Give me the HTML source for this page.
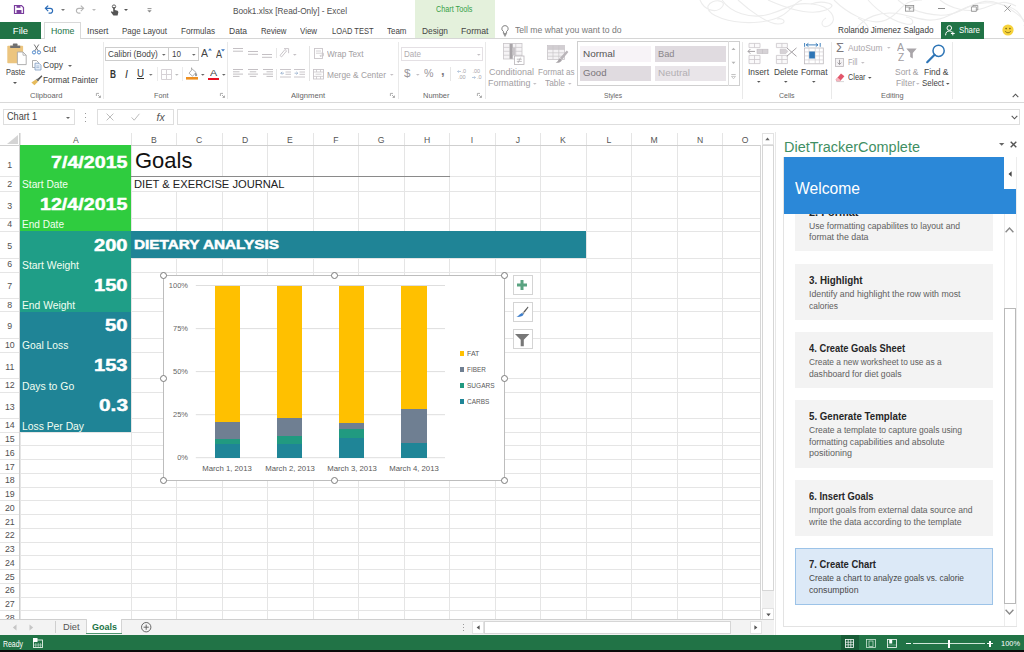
<!DOCTYPE html>
<html><head><meta charset="utf-8"><title>Excel</title>
<style>
html,body{margin:0;padding:0;background:#fff;}
body{width:1024px;height:652px;overflow:hidden;font-family:"Liberation Sans",sans-serif;}
#r{position:relative;width:1024px;height:652px;overflow:hidden;background:#fff;}
.a{position:absolute;}
.t{white-space:nowrap;}
svg{overflow:visible;}
</style></head><body><div id="r">
<svg class="a" style="left:0px;top:0px" width="1024" height="40" viewBox="0 0 1024 40"><g fill="none" stroke="#ececec" stroke-width="1.1">
<path d="M700 0C704 10 716 14 722 7S712-2 708 6C706 15 730 25 760 22S790 4 802 0"/>
<path d="M722 0C730 12 750 20 770 14S792 2 812 4S838 20 830 25S819 22 826 18"/>
<path d="M738 0C750 11 768 24 778 24S784 17 777 19"/>
<path d="M768 0C788 9 810 16 826 10S822 0 811 4"/>
<path d="M834 0C846 12 870 27 886 20S900 0 922 0"/>
<path d="M856 29C864 18 880 10 900 14S930 25 950 15S980 0 1000 4S1022 18 1024 22"/>
<path d="M898 0C910 11 940 21 960 11S990-4 1010 9S1024 24 1024 26"/>
<path d="M868 0C880 14 896 22 906 24S914 18 906 17"/>
<path d="M940 0C950 8 968 14 984 8S1004 0 1016 6"/>
<path d="M858 18C866 22 872 30 866 33S858 28 864 26"/>
</g></svg>
<div class="a" style="left:415px;top:0px;width:80px;height:38px;background:#e4f1dc;"></div>
<svg class="a" style="left:13.7px;top:5px" width="10" height="9" viewBox="0 0 10 9"><path d="M0.5 0.5h7l2 2v6h-9z" fill="none" stroke="#7b3f9e" stroke-width="1.2"/><rect x="2.5" y="5" width="5" height="3.5" fill="#7b3f9e"/><rect x="2.5" y="0.5" width="4" height="2.3" fill="#7b3f9e"/></svg>
<svg class="a" style="left:44px;top:5px" width="10" height="8.8" viewBox="0 0 11 11"><path d="M1.5 4.2H7a3 3 0 0 1 0 6H5" fill="none" stroke="#2b6cb8" stroke-width="1.5"/><path d="M4.5 0.8L1 4.2l3.5 3.4" fill="none" stroke="#2b6cb8" stroke-width="1.5"/></svg>
<svg class="a" style="left:60.5px;top:8.5px" width="4" height="2.5" viewBox="0 0 4 2.5"><path d="M0 0H4L2 2Z" fill="#777"/></svg>
<svg class="a" style="left:75px;top:5px" width="10" height="8.8" viewBox="0 0 11 11"><path d="M9.5 4.2H4a3 3 0 0 0 0 6h2" fill="none" stroke="#b5b5b5" stroke-width="1.4"/><path d="M6.5 0.8L10 4.2 6.5 7.6" fill="none" stroke="#b5b5b5" stroke-width="1.4"/></svg>
<svg class="a" style="left:91.5px;top:8.5px" width="4" height="2.5" viewBox="0 0 4 2.5"><path d="M0 0H4L2 2Z" fill="#bbb"/></svg>
<svg class="a" style="left:109.5px;top:4px" width="9" height="12" viewBox="0 0 9 12"><circle cx="4" cy="2.6" r="1.7" fill="none" stroke="#555" stroke-width="0.9"/><path d="M3.2 3v5L1.5 7.2 0.8 8l2.6 3.5h4.2L8.4 8 7.6 6.8 4.8 6V3z" fill="#555"/></svg>
<svg class="a" style="left:124px;top:8.5px" width="4" height="2.5" viewBox="0 0 4 2.5"><path d="M0 0H4L2 2Z" fill="#555"/></svg>
<svg class="a" style="left:146.5px;top:8px" width="5" height="5" viewBox="0 0 5 5"><path d="M0.5 0.6h4" stroke="#888" stroke-width="0.9"/><path d="M0.3 2.2h4.4L2.5 4.6z" fill="#888"/></svg>
<svg class="a" style="left:904.6px;top:4.9px" width="9.2" height="6.6" viewBox="0 0 9.2 6.6"><rect x="0.45" y="0.45" width="8.3" height="5.7" fill="none" stroke="#8c8c8c" stroke-width="0.8"/><path d="M0.5 2.1h8.2M4.6 2.8v2.7M3.4 4l1.2-1.2L5.8 4" fill="none" stroke="#8c8c8c" stroke-width="0.7"/></svg>
<div class="a" style="left:938.4px;top:8px;width:7px;height:1px;background:#8c8c8c;"></div>
<svg class="a" style="left:970.7px;top:4.8px" width="7.2" height="6.8" viewBox="0 0 7.2 6.8"><path d="M0.45 1.9h4.9v4.5H0.45zM1.9 1.9V0.45h4.9v4.5H5.35" fill="none" stroke="#8c8c8c" stroke-width="0.8"/></svg>
<svg class="a" style="left:1003.8px;top:5px" width="7" height="7" viewBox="0 0 7 7"><path d="M0.4 0.4l6.2 6.2M6.6 0.4L0.4 6.6" stroke="#8c8c8c" stroke-width="0.8"/></svg>
<div class="a" style="left:0px;top:38px;width:1024px;height:1px;background:#d6d6d6;"></div>
<div class="a" style="left:0px;top:22px;width:41px;height:17px;background:#217346;"></div>
<div class="a" style="left:44px;top:22px;width:36.5px;height:17.2px;background:#fff;border:1px solid #d9d9d9;box-sizing:border-box;border-bottom:none;"></div>
<svg class="a" style="left:501px;top:24.5px" width="8" height="12" viewBox="0 0 8 12"><path d="M4 0.6a3.1 3.1 0 0 0-1.6 5.8V8.4h3.2V6.4A3.1 3.1 0 0 0 4 0.6z" fill="none" stroke="#666" stroke-width="0.8"/><path d="M2.6 9.6h2.8M3 10.8h2" stroke="#666" stroke-width="0.8"/></svg>
<div class="a" style="left:941px;top:22px;width:42.5px;height:16.5px;background:#217346;"></div>
<svg class="a" style="left:945px;top:25px" width="10" height="11" viewBox="0 0 10 11"><circle cx="4.3" cy="3" r="2.3" fill="none" stroke="#fff" stroke-width="1"/><path d="M0.6 10.3c0-3 1.6-4.3 3.7-4.3 1.2 0 2 0.4 2.6 1" fill="none" stroke="#fff" stroke-width="1"/><path d="M7.8 6.6v3.8M5.9 8.5h3.8" stroke="#fff" stroke-width="1"/></svg>
<svg class="a" style="left:1001.5px;top:24px" width="12" height="12" viewBox="0 0 12 12"><circle cx="6" cy="6" r="5.6" fill="#f6d23a"/><circle cx="4.1" cy="4.6" r="0.8" fill="#6b5a10"/><circle cx="7.9" cy="4.6" r="0.8" fill="#6b5a10"/><path d="M3.2 7.2c1.4 2 4.2 2 5.6 0" fill="none" stroke="#6b5a10" stroke-width="0.8"/></svg>
<div class="a" style="left:0px;top:101.5px;width:1024px;height:1px;background:#d9d9d9;"></div>
<div class="a" style="left:103px;top:42px;width:1px;height:57px;background:#e9e9e9;"></div>
<div class="a" style="left:227px;top:42px;width:1px;height:57px;background:#e9e9e9;"></div>
<div class="a" style="left:398px;top:42px;width:1px;height:57px;background:#e9e9e9;"></div>
<div class="a" style="left:484.5px;top:42px;width:1px;height:57px;background:#e9e9e9;"></div>
<div class="a" style="left:742px;top:42px;width:1px;height:57px;background:#e9e9e9;"></div>
<div class="a" style="left:830.5px;top:42px;width:1px;height:57px;background:#e9e9e9;"></div>
<div class="a" style="left:952px;top:42px;width:1px;height:57px;background:#e9e9e9;"></div>
<svg class="a" style="left:95.5px;top:93.0px" width="5" height="5" viewBox="0 0 5 5"><path d="M0.4 3V0.4H3" fill="none" stroke="#999" stroke-width="0.8"/><path d="M2 2l2.2 2.2M4.5 2.6v1.9H2.6" fill="none" stroke="#999" stroke-width="0.8"/></svg>
<svg class="a" style="left:219.5px;top:93.0px" width="5" height="5" viewBox="0 0 5 5"><path d="M0.4 3V0.4H3" fill="none" stroke="#999" stroke-width="0.8"/><path d="M2 2l2.2 2.2M4.5 2.6v1.9H2.6" fill="none" stroke="#999" stroke-width="0.8"/></svg>
<svg class="a" style="left:389.5px;top:93.0px" width="5" height="5" viewBox="0 0 5 5"><path d="M0.4 3V0.4H3" fill="none" stroke="#999" stroke-width="0.8"/><path d="M2 2l2.2 2.2M4.5 2.6v1.9H2.6" fill="none" stroke="#999" stroke-width="0.8"/></svg>
<svg class="a" style="left:476.5px;top:93.0px" width="5" height="5" viewBox="0 0 5 5"><path d="M0.4 3V0.4H3" fill="none" stroke="#999" stroke-width="0.8"/><path d="M2 2l2.2 2.2M4.5 2.6v1.9H2.6" fill="none" stroke="#999" stroke-width="0.8"/></svg>
<svg class="a" style="left:1011.5px;top:93px" width="7" height="5" viewBox="0 0 7 5"><path d="M0.7 4.2L3.5 1.2l2.8 3" fill="none" stroke="#555" stroke-width="1.1"/></svg>
<div class="a" style="left:3px;top:109px;width:71.5px;height:16px;background:#fff;border:1px solid #dedede;box-sizing:border-box;"></div>
<svg class="a" style="left:66px;top:116.5px" width="4" height="2.5" viewBox="0 0 4 2.5"><path d="M0 0H4L2 2Z" fill="#666"/></svg>
<div class="a" style="left:84.5px;top:112.5px;width:1.2px;height:1.2px;background:#9a9a9a;"></div>
<div class="a" style="left:84.5px;top:116.5px;width:1.2px;height:1.2px;background:#9a9a9a;"></div>
<div class="a" style="left:84.5px;top:120.5px;width:1.2px;height:1.2px;background:#9a9a9a;"></div>
<div class="a" style="left:96.5px;top:109px;width:77px;height:16px;background:#fff;border:1px solid #dedede;box-sizing:border-box;"></div>
<svg class="a" style="left:105.5px;top:113px" width="8" height="8" viewBox="0 0 8 8"><path d="M0.6 0.6l6.8 6.8M7.4 0.6L0.6 7.4" stroke="#b4b4b4" stroke-width="0.9"/></svg>
<svg class="a" style="left:130.5px;top:113px" width="9" height="8" viewBox="0 0 9 8"><path d="M0.6 4.4l2.6 2.8L8.4 0.8" fill="none" stroke="#b4b4b4" stroke-width="0.9"/></svg>
<div class="a" style="left:176.5px;top:109px;width:843px;height:16px;background:#fff;border:1px solid #dedede;box-sizing:border-box;"></div>
<svg class="a" style="left:1010.5px;top:115px" width="7" height="5" viewBox="0 0 7 5"><path d="M0.7 0.8L3.5 3.8l2.8-3" fill="none" stroke="#555" stroke-width="1.1"/></svg>
<svg class="a" style="left:7px;top:42.5px" width="20" height="22" viewBox="0 0 20 22"><rect x="0.3" y="2.8" width="15.8" height="17.4" rx="0.8" fill="#ecc57f"/><rect x="3.2" y="2.6" width="10" height="2.4" fill="#707070"/><rect x="5.8" y="0.6" width="4.8" height="2.4" rx="0.8" fill="#707070"/>
<path d="M10.4 9h5.6l3.2 3.2v9.4h-8.8z" fill="#fff" stroke="#a8a8a8" stroke-width="0.9"/><path d="M16 9v3.2h3.2" fill="none" stroke="#a8a8a8" stroke-width="0.8"/></svg>
<svg class="a" style="left:13px;top:81.5px" width="4" height="2.5" viewBox="0 0 4 2.5"><path d="M0 0H4L2 2Z" fill="#555"/></svg>
<svg class="a" style="left:32px;top:43.5px" width="9" height="10.5" viewBox="0 0 9 10.5"><path d="M2.2 0.5l4 6.4M6.8 0.5l-4 6.4" stroke="#666" stroke-width="0.9"/><circle cx="2" cy="8.4" r="1.6" fill="none" stroke="#3b79c4" stroke-width="0.9"/><circle cx="7" cy="8.4" r="1.6" fill="none" stroke="#3b79c4" stroke-width="0.9"/></svg>
<svg class="a" style="left:31.5px;top:59.5px" width="9.5" height="10.5" viewBox="0 0 9.5 10.5"><path d="M0.5 0.5h4l2 2v5h-6z" fill="#fff" stroke="#9a9a9a" stroke-width="0.8"/><path d="M3 3.2h4l2 2V10H3z" fill="#eaf1fa" stroke="#7e9cc2" stroke-width="0.8"/><path d="M4.3 6h3M4.3 7.6h3" stroke="#7e9cc2" stroke-width="0.6"/></svg>
<svg class="a" style="left:67.5px;top:64.5px" width="4" height="2.5" viewBox="0 0 4 2.5"><path d="M0 0H4L2 2Z" fill="#666"/></svg>
<svg class="a" style="left:30.5px;top:74.5px" width="11.5" height="10.5" viewBox="0 0 11.5 10.5"><path d="M10.6 0.3l0.8 0.9-3.6 4-1.3-1.2z" fill="#555"/><path d="M6.2 3.6l1.9 1.8-1.2 1.2-1.9-1.8z" fill="#6a6a6a"/><path d="M4.8 4.6l2.2 2.2-3.6 3.4L0.4 7.6z" fill="#e6bb5c"/></svg>
<div class="a" style="left:105.3px;top:46.5px;width:63.5px;height:14.5px;background:#fff;border:1px solid #cdcdcd;box-sizing:border-box;"></div>
<svg class="a" style="left:162.2px;top:54.1px" width="3.6" height="2.3" viewBox="0 0 3.6 2.3"><path d="M0 0H3.6L1.8 1.8Z" fill="#666"/></svg>
<div class="a" style="left:168.3px;top:46.5px;width:30.3px;height:14.5px;background:#fff;border:1px solid #cdcdcd;box-sizing:border-box;"></div>
<svg class="a" style="left:192.2px;top:54.1px" width="3.6" height="2.3" viewBox="0 0 3.6 2.3"><path d="M0 0H3.6L1.8 1.8Z" fill="#666"/></svg>
<svg class="a" style="left:208px;top:48px" width="4" height="3" viewBox="0 0 4 3"><path d="M0 2.6L2 0.2l2 2.4z" fill="#3b79c4"/></svg>
<svg class="a" style="left:221px;top:49px" width="4" height="3" viewBox="0 0 4 3"><path d="M0 0.2L2 2.6 4 0.2z" fill="#3b79c4"/></svg>
<svg class="a" style="left:149.2px;top:73.6px" width="3.6" height="2.3" viewBox="0 0 3.6 2.3"><path d="M0 0H3.6L1.8 1.8Z" fill="#777"/></svg>
<div class="a" style="left:156.5px;top:67px;width:1px;height:14px;background:#ebebeb;"></div>
<svg class="a" style="left:161px;top:68.5px" width="11" height="11" viewBox="0 0 11 11"><path d="M0.5 0.5h10v10h-10zM5.5 0.5v10M0.5 5.5h10" fill="none" stroke="#d6d2d6" stroke-width="1"/></svg>
<svg class="a" style="left:175.2px;top:73.6px" width="3.6" height="2.3" viewBox="0 0 3.6 2.3"><path d="M0 0H3.6L1.8 1.8Z" fill="#bbb"/></svg>
<div class="a" style="left:181.5px;top:67px;width:1px;height:14px;background:#ebebeb;"></div>
<svg class="a" style="left:186px;top:67px" width="12" height="13" viewBox="0 0 12 13"><path d="M3 6.2l3.4-4 3.6 3.2-3.4 3.8z" fill="#fff" stroke="#8c8c8c" stroke-width="0.7"/><path d="M5.6 2.6V0.6M9.8 6.2c1 1.2 1.2 2 0.6 2.6s-1.4 0-0.6-2.6z" stroke="#777" stroke-width="0.7" fill="#9ab"/><rect x="0" y="10" width="12" height="2.6" fill="#ee8f1f"/></svg>
<svg class="a" style="left:200.7px;top:73.6px" width="3.6" height="2.3" viewBox="0 0 3.6 2.3"><path d="M0 0H3.6L1.8 1.8Z" fill="#666"/></svg>
<div class="a" style="left:207.5px;top:77.5px;width:11.5px;height:2.6px;background:#e81123;"></div>
<svg class="a" style="left:221.7px;top:73.6px" width="3.6" height="2.3" viewBox="0 0 3.6 2.3"><path d="M0 0H3.6L1.8 1.8Z" fill="#666"/></svg>
<svg class="a" style="left:233px;top:48.2px" width="12" height="12" viewBox="0 0 12 12"><rect x="0" y="0.0" width="10" height="1" fill="#c4c0c4"/><rect x="0" y="2.7" width="10" height="1" fill="#c4c0c4"/></svg>
<svg class="a" style="left:247.5px;top:51.0px" width="12" height="12" viewBox="0 0 12 12"><rect x="0" y="0.0" width="10" height="1" fill="#c4c0c4"/><rect x="0" y="2.8" width="10" height="1" fill="#c4c0c4"/></svg>
<svg class="a" style="left:262px;top:54.0px" width="12" height="12" viewBox="0 0 12 12"><rect x="0" y="0.0" width="10" height="1" fill="#c4c0c4"/><rect x="0" y="2.8" width="10" height="1" fill="#c4c0c4"/></svg>
<div class="a" style="left:276px;top:48px;width:1px;height:10px;background:#e6e6e6;"></div>
<div class="a" style="left:276px;top:69px;width:1px;height:11px;background:#e6e6e6;"></div>
<svg class="a" style="left:279px;top:46.5px" width="11" height="11" viewBox="0 0 11 11"><path d="M1 8.5l5-6 1.6 1.4-5 6zM5 1.6h4.6v4.6" fill="none" stroke="#c4c0c4" stroke-width="0.9"/></svg>
<svg class="a" style="left:293.2px;top:53.6px" width="3.6" height="2.3" viewBox="0 0 3.6 2.3"><path d="M0 0H3.6L1.8 1.8Z" fill="#c4c0c4"/></svg>
<div class="a" style="left:308.5px;top:46px;width:1px;height:35px;background:#e3e3e3;"></div>
<svg class="a" style="left:313.5px;top:48px" width="11" height="11" viewBox="0 0 11 11"><rect x="0.5" y="0.5" width="8" height="10" fill="none" stroke="#c9c5c9" stroke-width="0.9"/><path d="M2 3h5M2 5.2h7.5v2.6H6M7.2 6.6L6 7.8l1.2 1.2" fill="none" stroke="#c9c5c9" stroke-width="0.8"/></svg>
<svg class="a" style="left:232.5px;top:69px" width="12" height="12" viewBox="0 0 12 12"><rect x="0" y="0.0" width="10" height="1" fill="#c4c0c4"/><rect x="0" y="2.3" width="6.5" height="1" fill="#c4c0c4"/><rect x="0" y="4.6" width="10" height="1" fill="#c4c0c4"/><rect x="0" y="6.8999999999999995" width="6.5" height="1" fill="#c4c0c4"/></svg>
<svg class="a" style="left:247.5px;top:69px" width="12" height="12" viewBox="0 0 12 12"><rect x="0" y="0.0" width="10" height="1" fill="#c4c0c4"/><rect x="1.75" y="2.3" width="6.5" height="1" fill="#c4c0c4"/><rect x="0" y="4.6" width="10" height="1" fill="#c4c0c4"/><rect x="1.75" y="6.8999999999999995" width="6.5" height="1" fill="#c4c0c4"/></svg>
<svg class="a" style="left:262.5px;top:69px" width="12" height="12" viewBox="0 0 12 12"><rect x="0" y="0.0" width="10" height="1" fill="#c4c0c4"/><rect x="3.5" y="2.3" width="6.5" height="1" fill="#c4c0c4"/><rect x="0" y="4.6" width="10" height="1" fill="#c4c0c4"/><rect x="3.5" y="6.8999999999999995" width="6.5" height="1" fill="#c4c0c4"/></svg>
<svg class="a" style="left:280px;top:68.5px" width="11" height="10" viewBox="0 0 11 10"><path d="M0 0.5h11M5.5 3h5.5M5.5 5.3h5.5M0 8h11" stroke="#c4c0c4" stroke-width="0.9"/><path d="M4 4.2H0.8M2.2 2.8L0.8 4.2l1.4 1.4" fill="none" stroke="#9db4d0" stroke-width="0.9"/></svg>
<svg class="a" style="left:294px;top:68.5px" width="11" height="10" viewBox="0 0 11 10"><path d="M0 0.5h11M5.5 3h5.5M5.5 5.3h5.5M0 8h11" stroke="#c4c0c4" stroke-width="0.9"/><path d="M0.6 4.2h3.2M2.4 2.8l1.4 1.4-1.4 1.4" fill="none" stroke="#9db4d0" stroke-width="0.9"/></svg>
<svg class="a" style="left:313px;top:68.5px" width="11" height="10.5" viewBox="0 0 11 10.5"><rect x="0.5" y="0.5" width="10" height="9.5" fill="none" stroke="#c9c5c9" stroke-width="0.9"/><path d="M0.5 3h10M0.5 7.4h10M3.5 0.5V3M7.5 0.5V3M3.5 7.4V10M7.5 7.4V10M2.5 5.2h6" stroke="#c9c5c9" stroke-width="0.8" fill="none"/></svg>
<svg class="a" style="left:390.2px;top:74.1px" width="3.6" height="2.3" viewBox="0 0 3.6 2.3"><path d="M0 0H3.6L1.8 1.8Z" fill="#c4c0c4"/></svg>
<div class="a" style="left:400.5px;top:47px;width:82px;height:14px;background:#fff;border:1px solid #e4e0e4;box-sizing:border-box;"></div>
<svg class="a" style="left:476.7px;top:53.6px" width="3.6" height="2.3" viewBox="0 0 3.6 2.3"><path d="M0 0H3.6L1.8 1.8Z" fill="#c4c0c4"/></svg>
<svg class="a" style="left:415.7px;top:73.6px" width="3.6" height="2.3" viewBox="0 0 3.6 2.3"><path d="M0 0H3.6L1.8 1.8Z" fill="#c4c0c4"/></svg>
<div class="a" style="left:449.5px;top:67px;width:1px;height:14px;background:#e6e6e6;"></div>
<svg class="a" style="left:457px;top:69.5px" width="4" height="3" viewBox="0 0 4 3"><path d="M4 1.5H0.6M1.8 0.3L0.6 1.5l1.2 1.2" fill="none" stroke="#9db4d0" stroke-width="0.7"/></svg>
<svg class="a" style="left:472px;top:75.5px" width="4" height="3" viewBox="0 0 4 3"><path d="M0 1.5h3.4M2.2 0.3l1.2 1.2-1.2 1.2" fill="none" stroke="#9db4d0" stroke-width="0.7"/></svg>
<svg class="a" style="left:502.5px;top:42.5px" width="22" height="22" viewBox="0 0 22 22"><rect x="0.5" y="0.5" width="18.5" height="15.5" fill="#f6f4f6" stroke="#c9c5c9" stroke-width="0.8"/><path d="M0.5 4.4h18.5M0.5 8.3h18.5M0.5 12.2h18.5M6.6 0.5v15.5M12.8 0.5v15.5" stroke="#c9c5c9" stroke-width="0.7"/>
<rect x="6.9" y="0.8" width="2.8" height="15" fill="#a9a5a9"/><rect x="9.7" y="4.6" width="2.8" height="7.4" fill="#c9c5c9"/>
<rect x="11.5" y="13" width="9.5" height="8.5" fill="#fff" stroke="#b9b5b9" stroke-width="0.8"/><path d="M13.8 16.2h5M13.8 18.4h5M17.6 14.6l-2.6 5.4" stroke="#a9a5a9" stroke-width="0.7"/></svg>
<svg class="a" style="left:532.7px;top:82.89999999999999px" width="3.6" height="2.3" viewBox="0 0 3.6 2.3"><path d="M0 0H3.6L1.8 1.8Z" fill="#c4c0c4"/></svg>
<svg class="a" style="left:547px;top:44.5px" width="22" height="20" viewBox="0 0 22 20"><rect x="0.5" y="0.5" width="17" height="14" fill="#f4f2f4" stroke="#c9c5c9" stroke-width="0.8"/><rect x="0.9" y="0.9" width="16.2" height="3.4" fill="#d2ced2"/><path d="M0.5 4.4h17M0.5 7.8h17M0.5 11.2h17M6 0.5v14M11.8 0.5v14" stroke="#c9c5c9" stroke-width="0.7"/>
<path d="M19.8 5.6l1.6 1.4-6.2 7.6-2.4-1.6z" fill="#b9b5b9"/><path d="M12.6 13.2l2.4 1.8c-1 2.4-4.6 3.4-6.4 2.6 2-0.6 2.6-2.6 4-4.4z" fill="#a9a5a9"/></svg>
<svg class="a" style="left:567.7px;top:82.89999999999999px" width="3.6" height="2.3" viewBox="0 0 3.6 2.3"><path d="M0 0H3.6L1.8 1.8Z" fill="#c4c0c4"/></svg>
<div class="a" style="left:577px;top:41px;width:162.5px;height:45px;background:#fff;border:1px solid #cfcfcf;box-sizing:border-box;"></div>
<div class="a" style="left:579.5px;top:45.5px;width:71.5px;height:16px;background:#f7f3f7;"></div>
<div class="a" style="left:654.5px;top:45.5px;width:71.5px;height:16px;background:#e0dbe0;"></div>
<div class="a" style="left:579.5px;top:65.5px;width:71.5px;height:15.5px;background:#e0dbe0;"></div>
<div class="a" style="left:654.5px;top:65.5px;width:71.5px;height:15.5px;background:#e9e5e9;"></div>
<div class="a" style="left:728px;top:41px;width:1px;height:45px;background:#dcdcdc;"></div>
<svg class="a" style="left:731px;top:47px" width="5" height="4" viewBox="0 0 5 4"><path d="M0.5 3L2.5 0.8 4.5 3z" fill="#b5b5b5"/></svg>
<svg class="a" style="left:731px;top:61px" width="5" height="4" viewBox="0 0 5 4"><path d="M0.5 0.8L2.5 3 4.5 0.8z" fill="#b5b5b5"/></svg>
<svg class="a" style="left:731px;top:74px" width="5" height="6" viewBox="0 0 5 6"><path d="M0.3 0.5h4.4" stroke="#b5b5b5" stroke-width="0.8"/><path d="M0.5 2.4L2.5 4.8 4.5 2.4z" fill="none" stroke="#b5b5b5" stroke-width="0.7"/></svg>
<svg class="a" style="left:747px;top:43px" width="22" height="21" viewBox="0 0 22 21"><path d="M2 0.4h11v4.2H2zM7.5 0.4v4.2M2 12.4h11v8.2H2zM7.5 12.4v8.2M2 16.5h11" fill="#faf9fa" stroke="#cbc7cb" stroke-width="0.8"/><rect x="10" y="6.2" width="11" height="4.4" fill="#d6d2d6" stroke="#c2bec2" stroke-width="0.6"/><path d="M15.5 6.2v4.4" stroke="#c2bec2" stroke-width="0.6"/><path d="M8 8.4H1M3.4 6L1 8.4l2.4 2.4" fill="none" stroke="#a5a1a5" stroke-width="1"/></svg>
<svg class="a" style="left:756.7px;top:81.3px" width="3.6" height="2.3" viewBox="0 0 3.6 2.3"><path d="M0 0H3.6L1.8 1.8Z" fill="#555"/></svg>
<svg class="a" style="left:776px;top:43px" width="22" height="21" viewBox="0 0 22 21"><path d="M0.4 0.4h11v4.2h-11zM5.9 0.4v4.2M0.4 12.4h11v8.2h-11zM5.9 12.4v8.2M0.4 16.5h11" fill="#faf9fa" stroke="#cbc7cb" stroke-width="0.8"/><path d="M4.2 6.2h5.6l2 2.2-2 2.2H4.2z" fill="#d6d2d6" stroke="#c2bec2" stroke-width="0.6"/><path d="M10.8 4.9l9.7 8.4M20.5 4.9l-9.7 8.4" stroke="#a5a1a5" stroke-width="1"/></svg>
<svg class="a" style="left:783.7px;top:81.3px" width="3.6" height="2.3" viewBox="0 0 3.6 2.3"><path d="M0 0H3.6L1.8 1.8Z" fill="#555"/></svg>
<svg class="a" style="left:804px;top:42.5px" width="20" height="22" viewBox="0 0 20 22"><path d="M2.2 1.9h11.8M0.6 0v3.8M16.2 0v3.8M4.4 0.3L2.2 1.9l2.2 1.6M11.8 0.3l2.2 1.6-2.2 1.6" fill="none" stroke="#2e75b6" stroke-width="0.9"/>
<rect x="0.5" y="5" width="18.8" height="15.8" fill="#fff" stroke="#bdb9bd" stroke-width="0.8"/><path d="M0.5 8.9h18.8M0.5 12.9h18.8M0.5 16.9h18.8M5 5v15.8M11.2 5v15.8M15.4 5v15.8" stroke="#d2ced2" stroke-width="0.7"/><rect x="5.2" y="8.5" width="5.7" height="7" fill="#2e75b6"/></svg>
<svg class="a" style="left:811.7px;top:81.3px" width="3.6" height="2.3" viewBox="0 0 3.6 2.3"><path d="M0 0H3.6L1.8 1.8Z" fill="#555"/></svg>
<svg class="a" style="left:887.2px;top:47.1px" width="3.6" height="2.3" viewBox="0 0 3.6 2.3"><path d="M0 0H3.6L1.8 1.8Z" fill="#c4c0c4"/></svg>
<svg class="a" style="left:835px;top:57.5px" width="9" height="9" viewBox="0 0 9 9"><rect x="0.5" y="0.5" width="8" height="8" fill="#f4f2f4" stroke="#bcb8bc" stroke-width="0.8"/><path d="M4.5 1.8v4.6M2.6 4.6l1.9 2 1.9-2" fill="none" stroke="#9a969a" stroke-width="0.9"/></svg>
<svg class="a" style="left:860.7px;top:61.6px" width="3.6" height="2.3" viewBox="0 0 3.6 2.3"><path d="M0 0H3.6L1.8 1.8Z" fill="#c4c0c4"/></svg>
<svg class="a" style="left:834.5px;top:72.5px" width="10" height="9" viewBox="0 0 10 9"><path d="M6 0.6l3.4 2.6-4.6 5.2H2.2L0.6 6.8z" fill="#e2566a"/><path d="M2.6 4.4l3.2 2.8-1 1.2H2.2L0.6 6.8z" fill="#f4b6bf"/><path d="M1 8.6h8" stroke="#c9c5c9" stroke-width="0.7"/></svg>
<svg class="a" style="left:868.2px;top:76.6px" width="3.6" height="2.3" viewBox="0 0 3.6 2.3"><path d="M0 0H3.6L1.8 1.8Z" fill="#555"/></svg>
<svg class="a" style="left:906px;top:48px" width="12" height="12" viewBox="0 0 12 12"><path d="M0.3 0.5h10.4L6.8 5v5.6l-2.6-1.6V5z" fill="#a9a5a9"/></svg>
<svg class="a" style="left:915.7px;top:82.89999999999999px" width="3.6" height="2.3" viewBox="0 0 3.6 2.3"><path d="M0 0H3.6L1.8 1.8Z" fill="#c4c0c4"/></svg>
<svg class="a" style="left:926px;top:43.5px" width="20" height="20" viewBox="0 0 20 20"><circle cx="12.6" cy="6.8" r="5.6" fill="none" stroke="#2e75b6" stroke-width="1.5"/><path d="M8.6 10.8L1.2 18.2" stroke="#2e75b6" stroke-width="2.2" stroke-linecap="round"/></svg>
<svg class="a" style="left:946.2px;top:82.89999999999999px" width="3.6" height="2.3" viewBox="0 0 3.6 2.3"><path d="M0 0H3.6L1.8 1.8Z" fill="#555"/></svg>
<svg class="a" style="left:0px;top:0px" width="1024" height="652" viewBox="0 0 1024 652"><path d="M0 176.00H761M0 191.00H761M0 218.00H761M0 231.00H761M0 258.00H761M0 272.00H761M0 298.00H761M0 311.50H761M0 338.00H761M0 352.00H761M0 378.00H761M0 392.00H761M0 418.00H761M0 432.00H761M0 445.85H761M0 459.60H761M0 473.35H761M0 487.10H761M0 500.85H761M0 514.60H761M0 528.35H761M0 542.10H761M0 555.85H761M0 569.60H761M0 583.35H761M0 597.10H761M0 610.85H761M20 133V619M131 133V619M176.5 133V619M222.0 133V619M267.5 133V619M313.0 133V619M358.5 133V619M404.0 133V619M449.5 133V619M495.0 133V619M540.5 133V619M586.0 133V619M631.5 133V619M677.0 133V619M722.5 133V619" stroke="#e5e5e5" stroke-width="1" fill="none" shape-rendering="crispEdges"/><path d="M0 145.5H761M19.5 133V619" stroke="#cfcfcf" stroke-width="1" fill="none" shape-rendering="crispEdges"/></svg>
<div class="a" style="left:760px;top:145px;width:1px;height:474px;background:#d6d6d6;"></div>
<svg class="a" style="left:7px;top:135px" width="11" height="9" viewBox="0 0 11 9"><path d="M11 0v9H0z" fill="#d4d4d4"/></svg>
<div class="a" style="left:20px;top:145px;width:111px;height:86px;background:#2fcc3f;"></div>
<div class="a" style="left:20px;top:231px;width:111px;height:80.5px;background:#1f9e87;"></div>
<div class="a" style="left:20px;top:311.5px;width:111px;height:120.5px;background:#1f8496;"></div>
<div class="a" style="left:131px;top:231px;width:455px;height:27px;background:#1f8496;"></div>
<div class="a" style="left:170px;top:146px;width:14px;height:29.5px;background:#fff;"></div>
<div class="a" style="left:175.5px;top:176.5px;width:3px;height:14px;background:#fff;"></div>
<div class="a" style="left:221px;top:176.5px;width:3px;height:14px;background:#fff;"></div>
<div class="a" style="left:266.5px;top:176.5px;width:3px;height:14px;background:#fff;"></div>
<div class="a" style="left:131px;top:175.5px;width:319px;height:1px;background:#8a8a8a;"></div>
<div class="a" style="left:163px;top:275px;width:342px;height:206px;background:#fff;border:1px solid #bdbdbd;box-sizing:border-box;"></div>
<svg class="a" style="left:0px;top:0px" width="1024" height="652" viewBox="0 0 1024 652"><path d="M195.8 285.5H445M195.8 328.6H445M195.8 371.6H445M195.8 414.7H445M195.8 457.7H445" stroke="#dedede" stroke-width="1" fill="none"/></svg>
<div class="a" style="left:214.5px;top:285.5px;width:25.2px;height:136.5px;background:#ffc000;"></div>
<div class="a" style="left:214.5px;top:422.0px;width:25.2px;height:17.2px;background:#6f7f92;"></div>
<div class="a" style="left:214.5px;top:439.2px;width:25.2px;height:4.7px;background:#219a80;"></div>
<div class="a" style="left:214.5px;top:443.9px;width:25.2px;height:14.0px;background:#1f8597;"></div>
<div class="a" style="left:276.9px;top:285.5px;width:25.2px;height:132.2px;background:#ffc000;"></div>
<div class="a" style="left:276.9px;top:417.7px;width:25.2px;height:18.4px;background:#6f7f92;"></div>
<div class="a" style="left:276.9px;top:436.1px;width:25.2px;height:7.8px;background:#219a80;"></div>
<div class="a" style="left:276.9px;top:443.9px;width:25.2px;height:14.0px;background:#1f8597;"></div>
<div class="a" style="left:339.2px;top:285.5px;width:25.2px;height:137.0px;background:#ffc000;"></div>
<div class="a" style="left:339.2px;top:422.5px;width:25.2px;height:6.3px;background:#6f7f92;"></div>
<div class="a" style="left:339.2px;top:428.8px;width:25.2px;height:9.6px;background:#219a80;"></div>
<div class="a" style="left:339.2px;top:438.4px;width:25.2px;height:19.5px;background:#1f8597;"></div>
<div class="a" style="left:401.4px;top:285.5px;width:25.2px;height:123.2px;background:#ffc000;"></div>
<div class="a" style="left:401.4px;top:408.7px;width:25.2px;height:33.9px;background:#6f7f92;"></div>
<div class="a" style="left:401.4px;top:442.6px;width:25.2px;height:15.3px;background:#1f8597;"></div>
<div class="a" style="left:459.6px;top:351.0px;width:4.8px;height:4.8px;background:#ffc000;"></div>
<div class="a" style="left:459.6px;top:367.0px;width:4.8px;height:4.8px;background:#6f7f92;"></div>
<div class="a" style="left:459.6px;top:383.0px;width:4.8px;height:4.8px;background:#219a80;"></div>
<div class="a" style="left:459.6px;top:399.0px;width:4.8px;height:4.8px;background:#1f8597;"></div>
<div class="a" style="left:159.8px;top:271.8px;width:7.4px;height:7.4px;background:#fff;border:1px solid #7a7a7a;box-sizing:border-box;border-radius:50%;"></div>
<div class="a" style="left:330.5px;top:271.8px;width:7.4px;height:7.4px;background:#fff;border:1px solid #7a7a7a;box-sizing:border-box;border-radius:50%;"></div>
<div class="a" style="left:500.8px;top:271.8px;width:7.4px;height:7.4px;background:#fff;border:1px solid #7a7a7a;box-sizing:border-box;border-radius:50%;"></div>
<div class="a" style="left:159.8px;top:374.5px;width:7.4px;height:7.4px;background:#fff;border:1px solid #7a7a7a;box-sizing:border-box;border-radius:50%;"></div>
<div class="a" style="left:500.8px;top:374.5px;width:7.4px;height:7.4px;background:#fff;border:1px solid #7a7a7a;box-sizing:border-box;border-radius:50%;"></div>
<div class="a" style="left:159.8px;top:476.8px;width:7.4px;height:7.4px;background:#fff;border:1px solid #7a7a7a;box-sizing:border-box;border-radius:50%;"></div>
<div class="a" style="left:330.5px;top:476.8px;width:7.4px;height:7.4px;background:#fff;border:1px solid #7a7a7a;box-sizing:border-box;border-radius:50%;"></div>
<div class="a" style="left:500.8px;top:476.8px;width:7.4px;height:7.4px;background:#fff;border:1px solid #7a7a7a;box-sizing:border-box;border-radius:50%;"></div>
<div class="a" style="left:513px;top:275.3px;width:19.5px;height:19.5px;background:#fff;border:1px solid #d4d4d4;box-sizing:border-box;"></div>
<div class="a" style="left:513px;top:302.3px;width:19.5px;height:19.5px;background:#fff;border:1px solid #d4d4d4;box-sizing:border-box;"></div>
<div class="a" style="left:513px;top:329.2px;width:19.5px;height:19.5px;background:#fff;border:1px solid #d4d4d4;box-sizing:border-box;"></div>
<svg class="a" style="left:517.4px;top:280px" width="10" height="10" viewBox="0 0 10 10"><path d="M3.5 0h3v3.5H10v3H6.5V10h-3V6.5H0v-3h3.5z" fill="#5aa381"/></svg>
<svg class="a" style="left:516px;top:306px" width="13" height="13" viewBox="0 0 13 13"><path d="M11.9 0.4c0.6 0.5 0.5 1.1 0.1 1.7L8.6 6.6 7.4 5.7z" fill="#555"/><path d="M7.2 5.9l1.3 1-1 1.3-1.5-1.1z" fill="#8a8a8a"/><path d="M5.9 7l1.7 1.3c-0.5 2-3.8 3-7.2 2.7 2.2-0.8 3-3 5.5-4z" fill="#3f7fcb"/></svg>
<svg class="a" style="left:515.2px;top:333.5px" width="14.4" height="12.4" viewBox="0 0 14.4 12.4"><path d="M0 0h14.4L8.8 5.8V12.2H5.7V5.8z" fill="#777"/></svg>
<div class="a" style="left:762px;top:133px;width:11.8px;height:486px;background:#f1f1f1;"></div>
<div class="a" style="left:762px;top:133px;width:11.5px;height:11.5px;background:#fff;border:1px solid #e2e2e2;box-sizing:border-box;"></div>
<svg class="a" style="left:765px;top:136.5px" width="5" height="4" viewBox="0 0 5 4"><path d="M0.3 3.2L2.5 0.6l2.2 2.6z" fill="#666"/></svg>
<div class="a" style="left:762px;top:145px;width:11.5px;height:446px;background:#fff;border:1px solid #d6d6d6;box-sizing:border-box;"></div>
<div class="a" style="left:762px;top:608px;width:11.5px;height:11.5px;background:#fff;border:1px solid #e2e2e2;box-sizing:border-box;"></div>
<svg class="a" style="left:765.5px;top:612.5px" width="5" height="4" viewBox="0 0 5 4"><path d="M0.3 0.6L2.5 3.2 4.7 0.6z" fill="#555"/></svg>
<div class="a" style="left:0px;top:619px;width:775px;height:16.5px;background:#f3f3f3;"></div>
<div class="a" style="left:0px;top:619px;width:775px;height:1px;background:#cfcfcf;"></div>
<svg class="a" style="left:12px;top:624px" width="5" height="7" viewBox="0 0 5 7"><path d="M4.5 0.5v6L0.8 3.5z" fill="#c6c6c6"/></svg>
<svg class="a" style="left:29px;top:624px" width="5" height="7" viewBox="0 0 5 7"><path d="M0.5 0.5v6l3.7-3z" fill="#c6c6c6"/></svg>
<div class="a" style="left:55px;top:621px;width:1px;height:12px;background:#cfcfcf;"></div>
<div class="a" style="left:86px;top:619px;width:36px;height:13.8px;background:#fff;border-left:1px solid #d4d4d4;border-right:1px solid #d4d4d4;box-sizing:border-box;"></div>
<div class="a" style="left:86px;top:632.6px;width:36px;height:1.2px;background:#4f9670;"></div>
<svg class="a" style="left:140.5px;top:622px" width="10.4" height="10.4" viewBox="0 0 10.4 10.4"><circle cx="5.2" cy="5.2" r="4.7" fill="none" stroke="#5a5a5a" stroke-width="0.9"/><path d="M5.2 2.6v5.2M2.6 5.2h5.2" stroke="#5a5a5a" stroke-width="0.9"/></svg>
<div class="a" style="left:463px;top:623.5px;width:1.2px;height:1.2px;background:#9a9a9a;"></div>
<div class="a" style="left:463px;top:626.5px;width:1.2px;height:1.2px;background:#9a9a9a;"></div>
<div class="a" style="left:463px;top:629.5px;width:1.2px;height:1.2px;background:#9a9a9a;"></div>
<div class="a" style="left:472px;top:621px;width:12px;height:12.5px;background:#fff;border:1px solid #e2e2e2;box-sizing:border-box;"></div>
<svg class="a" style="left:476px;top:625px" width="4" height="5" viewBox="0 0 4 5"><path d="M3.6 0.3v4.4L0.6 2.5z" fill="#555"/></svg>
<div class="a" style="left:484px;top:621px;width:246.5px;height:12.5px;background:#fff;border:1px solid #d6d6d6;box-sizing:border-box;"></div>
<div class="a" style="left:749.5px;top:621px;width:12px;height:12.5px;background:#fff;border:1px solid #e2e2e2;box-sizing:border-box;"></div>
<svg class="a" style="left:753.5px;top:625px" width="4" height="5" viewBox="0 0 4 5"><path d="M0.4 0.3v4.4l3-2.2z" fill="#555"/></svg>
<div class="a" style="left:0px;top:635.2px;width:1024px;height:14.5px;background:#217346;"></div>
<div class="a" style="left:0px;top:649.6px;width:1024px;height:3px;background:#0a0a0a;"></div>
<svg class="a" style="left:33.3px;top:638.3px" width="10" height="10" viewBox="0 0 10 10"><rect x="0.5" y="2" width="9" height="7.5" fill="none" stroke="#e8f3ec" stroke-width="0.9"/><rect x="0" y="0" width="4.5" height="4" fill="#fff"/><path d="M2.8 5v4M5.2 5v4M7.4 5v4M1 7h8" stroke="#cfe6d8" stroke-width="0.6"/></svg>
<div class="a" style="left:840.5px;top:635.2px;width:18.5px;height:14.4px;background:#185c37;"></div>
<svg class="a" style="left:844.5px;top:638.5px" width="9" height="9" viewBox="0 0 9 9"><rect x="0.5" y="0.5" width="8" height="8" fill="none" stroke="#fff" stroke-width="0.8"/><path d="M3.2 0.5v8M5.8 0.5v8M0.5 3.2h8M0.5 5.8h8" stroke="#fff" stroke-width="0.7"/></svg>
<svg class="a" style="left:866px;top:638.5px" width="10" height="9" viewBox="0 0 10 9"><rect x="0.5" y="0.5" width="9" height="8" fill="none" stroke="#cfe6d8" stroke-width="0.8"/><rect x="3" y="2" width="4" height="5.4" fill="none" stroke="#cfe6d8" stroke-width="0.7"/></svg>
<svg class="a" style="left:887px;top:638.5px" width="10" height="9" viewBox="0 0 10 9"><rect x="0.5" y="0.5" width="9" height="8" fill="none" stroke="#fff" stroke-width="0.8"/><rect x="2.2" y="0.5" width="3" height="4" fill="#fff"/><path d="M0.5 6h9" stroke="#fff" stroke-width="0.6" stroke-dasharray="1 1"/></svg>
<div class="a" style="left:906px;top:643px;width:4.5px;height:1.2px;background:#fff;"></div>
<div class="a" style="left:913px;top:643.2px;width:72px;height:0.8px;background:#cfe6d8;"></div>
<div class="a" style="left:948px;top:639.5px;width:2px;height:8px;background:#fff;"></div>
<div class="a" style="left:987px;top:642.9px;width:6px;height:1.4px;background:#fff;"></div>
<div class="a" style="left:989.3px;top:640.6px;width:1.4px;height:6px;background:#fff;"></div>
<div class="a" style="left:774px;top:131px;width:250px;height:504.2px;background:#fff;"></div>
<div class="a" style="left:775px;top:132px;width:1px;height:503px;background:#e8e8e8;"></div>
<svg class="a" style="left:998.5999999999999px;top:143.25px" width="5.4" height="3.2" viewBox="0 0 5.4 3.2"><path d="M0 0H5.4L2.7 2.7Z" fill="#666"/></svg>
<svg class="a" style="left:1009.8px;top:141.2px" width="7" height="7" viewBox="0 0 7 7"><path d="M0.7 0.7l5.6 5.6M6.3 0.7L0.7 6.3" stroke="#555" stroke-width="1.4"/></svg>
<div class="a" style="left:783px;top:157px;width:233.5px;height:469.5px;background:#fff;border:1px solid #e3e3e3;box-sizing:border-box;border-right:none;"></div>
<div class="a" style="left:1003.5px;top:213px;width:1px;height:413px;background:#ececec;"></div>
<div class="a" style="left:783.6px;top:157.4px;width:232.4px;height:56.7px;background:#2b88d8;"></div>
<div class="a" style="left:1003.7px;top:157.3px;width:12.3px;height:31.5px;background:#fff;"></div>
<div class="a" style="left:1015.7px;top:157.3px;width:1px;height:469px;background:#ededed;"></div>
<svg class="a" style="left:1008px;top:170.5px" width="4" height="6" viewBox="0 0 4 6"><path d="M3.6 0.3v5.4L0.5 3z" fill="#444"/></svg>
<svg class="a" style="left:1005px;top:227px" width="9" height="6" viewBox="0 0 9 6"><path d="M0.6 5.2L4.5 1l3.9 4.2" fill="none" stroke="#8a8a8a" stroke-width="1.4"/></svg>
<svg class="a" style="left:1005px;top:608.5px" width="9" height="6" viewBox="0 0 9 6"><path d="M0.6 0.8L4.5 5l3.9-4.2" fill="none" stroke="#8a8a8a" stroke-width="1.4"/></svg>
<div class="a" style="left:1004px;top:307.5px;width:12px;height:296px;background:#fff;border:1px solid #b9b9b9;box-sizing:border-box;"></div>
<div class="a" style="left:794.5px;top:213.8px;width:198.5px;height:37.69999999999999px;background:#f3f3f3;"></div>
<div class="a" style="left:809px;top:213.8px;width:80px;height:6px;overflow:hidden"><span class="a t" style="left:0;top:-7.6px;font-size:11px;line-height:13.2px;font-weight:bold;color:#262626">2. Format</span></div>
<div class="a" style="left:794.5px;top:263.8px;width:198.5px;height:56.19999999999999px;background:#f3f3f3;"></div>
<div class="a" style="left:794.5px;top:332px;width:198.5px;height:56px;background:#f3f3f3;"></div>
<div class="a" style="left:794.5px;top:400px;width:198.5px;height:67.5px;background:#f3f3f3;"></div>
<div class="a" style="left:794.5px;top:480px;width:198.5px;height:56px;background:#f3f3f3;"></div>
<div class="a" style="left:794.5px;top:548px;width:198.5px;height:56.5px;background:#dce9f7;border:1px solid #9cc3e8;box-sizing:border-box;"></div>
<span class="a t" style="top:5.44px;font-size:8.2px;line-height:9.84px;color:#35a047;transform:scaleX(0.882);transform-origin:0 50%;left:436.3px;">Chart Tools</span>
<span class="a t" style="top:4.64px;font-size:9.5px;line-height:11.40px;color:#505050;transform:scaleX(0.871);transform-origin:0 50%;left:232.5px;">Book1.xlsx  [Read-Only] - Excel</span>
<span class="a t" style="top:24.64px;font-size:9.5px;line-height:11.40px;color:#fff;left:-129.5px;width:300px;text-align:center;">File</span>
<span class="a t" style="top:24.64px;font-size:9.5px;line-height:11.40px;color:#217346;transform:scaleX(0.927);transform-origin:0 50%;left:50.5px;">Home</span>
<span class="a t" style="top:24.64px;font-size:9.5px;line-height:11.40px;color:#444;transform:scaleX(0.905);transform-origin:0 50%;left:87px;">Insert</span>
<span class="a t" style="top:24.64px;font-size:9.5px;line-height:11.40px;color:#444;transform:scaleX(0.843);transform-origin:0 50%;left:122px;">Page Layout</span>
<span class="a t" style="top:24.64px;font-size:9.5px;line-height:11.40px;color:#444;transform:scaleX(0.859);transform-origin:0 50%;left:181px;">Formulas</span>
<span class="a t" style="top:24.64px;font-size:9.5px;line-height:11.40px;color:#444;transform:scaleX(0.896);transform-origin:0 50%;left:229px;">Data</span>
<span class="a t" style="top:24.64px;font-size:9.5px;line-height:11.40px;color:#444;transform:scaleX(0.818);transform-origin:0 50%;left:261px;">Review</span>
<span class="a t" style="top:24.64px;font-size:9.5px;line-height:11.40px;color:#444;transform:scaleX(0.832);transform-origin:0 50%;left:300px;">View</span>
<span class="a t" style="top:24.64px;font-size:9.5px;line-height:11.40px;color:#444;transform:scaleX(0.789);transform-origin:0 50%;left:332px;">LOAD TEST</span>
<span class="a t" style="top:24.64px;font-size:9.5px;line-height:11.40px;color:#444;transform:scaleX(0.839);transform-origin:0 50%;left:387px;">Team</span>
<span class="a t" style="top:24.64px;font-size:9.5px;line-height:11.40px;color:#444;transform:scaleX(0.879);transform-origin:0 50%;left:422px;">Design</span>
<span class="a t" style="top:24.64px;font-size:9.5px;line-height:11.40px;color:#444;transform:scaleX(0.914);transform-origin:0 50%;left:461px;">Format</span>
<span class="a t" style="top:24.95px;font-size:9px;line-height:10.80px;color:#7a7a7a;transform:scaleX(0.959);transform-origin:0 50%;left:514.5px;">Tell me what you want to do</span>
<span class="a t" style="top:24.95px;font-size:9px;line-height:10.80px;color:#3c3c3c;transform:scaleX(0.909);transform-origin:0 50%;left:838px;">Rolando Jimenez Salgado</span>
<span class="a t" style="top:24.95px;font-size:9px;line-height:10.80px;color:#fff;transform:scaleX(0.874);transform-origin:0 50%;left:958.5px;">Share</span>
<span class="a t" style="top:90.57px;font-size:8px;line-height:9.60px;color:#666;transform:scaleX(0.949);transform-origin:0 50%;left:29.5px;">Clipboard</span>
<span class="a t" style="top:90.57px;font-size:8px;line-height:9.60px;color:#666;transform:scaleX(0.905);transform-origin:0 50%;left:153.5px;">Font</span>
<span class="a t" style="top:90.57px;font-size:8px;line-height:9.60px;color:#666;transform:scaleX(0.956);transform-origin:0 50%;left:291px;">Alignment</span>
<span class="a t" style="top:90.57px;font-size:8px;line-height:9.60px;color:#666;transform:scaleX(0.931);transform-origin:0 50%;left:422.5px;">Number</span>
<span class="a t" style="top:90.57px;font-size:8px;line-height:9.60px;color:#666;transform:scaleX(0.826);transform-origin:0 50%;left:604px;">Styles</span>
<span class="a t" style="top:90.57px;font-size:8px;line-height:9.60px;color:#666;transform:scaleX(0.872);transform-origin:0 50%;left:778.5px;">Cells</span>
<span class="a t" style="top:90.57px;font-size:8px;line-height:9.60px;color:#666;transform:scaleX(0.920);transform-origin:0 50%;left:880.5px;">Editing</span>
<span class="a t" style="top:110.83px;font-size:10px;line-height:12.00px;color:#444;transform:scaleX(0.915);transform-origin:0 50%;left:7px;">Chart 1</span>
<span class="a t" style="top:110.53px;font-size:10.5px;line-height:12.60px;color:#555;font-style:italic;left:156.5px;font-family:"Liberation Serif",serif;letter-spacing:-0.5px;">fx</span>
<span class="a t" style="top:66.55px;font-size:9px;line-height:10.80px;color:#444;transform:scaleX(0.826);transform-origin:0 50%;left:5.5px;">Paste</span>
<span class="a t" style="top:42.64px;font-size:9.5px;line-height:11.40px;color:#444;transform:scaleX(0.879);transform-origin:0 50%;left:43px;">Cut</span>
<span class="a t" style="top:58.64px;font-size:9.5px;line-height:11.40px;color:#444;transform:scaleX(0.901);transform-origin:0 50%;left:43px;">Copy</span>
<span class="a t" style="top:74.14px;font-size:9.5px;line-height:11.40px;color:#444;transform:scaleX(0.875);transform-origin:0 50%;left:43px;">Format Painter</span>
<span class="a t" style="top:48.75px;font-size:9px;line-height:10.80px;color:#444;transform:scaleX(0.912);transform-origin:0 50%;left:107.8px;">Calibri (Body)</span>
<span class="a t" style="top:48.75px;font-size:9px;line-height:10.80px;color:#444;transform:scaleX(0.899);transform-origin:0 50%;left:171.5px;">10</span>
<span class="a t" style="top:47.41px;font-size:11.5px;line-height:13.80px;color:#444;transform:scaleX(0.912);transform-origin:0 50%;left:201px;">A</span>
<span class="a t" style="top:48.84px;font-size:10px;line-height:12.00px;color:#444;transform:scaleX(0.899);transform-origin:0 50%;left:215.5px;">A</span>
<span class="a t" style="top:67.53px;font-size:10.5px;line-height:12.60px;color:#333;font-weight:bold;transform:scaleX(0.790);transform-origin:0 50%;left:109.5px;">B</span>
<span class="a t" style="top:67.53px;font-size:10.5px;line-height:12.60px;color:#333;font-style:italic;left:125px;font-family:"Liberation Serif",serif;">I</span>
<span class="a t" style="top:67.03px;font-size:10.5px;line-height:12.60px;color:#333;transform:scaleX(0.922);transform-origin:0 50%;left:137px;text-decoration:underline;">U</span>
<span class="a t" style="top:66.56px;font-size:9.8px;line-height:11.76px;color:#444;transform:scaleX(1.100);transform-origin:0 50%;left:209.8px;">A</span>
<span class="a t" style="top:48.14px;font-size:9.5px;line-height:11.40px;color:#a29ea2;transform:scaleX(0.860);transform-origin:0 50%;left:326.5px;">Wrap Text</span>
<span class="a t" style="top:68.64px;font-size:9.5px;line-height:11.40px;color:#a29ea2;transform:scaleX(0.880);transform-origin:0 50%;left:326.5px;">Merge &amp; Center</span>
<span class="a t" style="top:48.95px;font-size:9px;line-height:10.80px;color:#b0acb0;transform:scaleX(0.894);transform-origin:0 50%;left:403.5px;">Date</span>
<span class="a t" style="top:66.91px;font-size:11.5px;line-height:13.80px;color:#9a969a;transform:scaleX(1.015);transform-origin:0 50%;left:404px;">$</span>
<span class="a t" style="top:66.91px;font-size:11.5px;line-height:13.80px;color:#9a969a;transform:scaleX(0.928);transform-origin:0 50%;left:423.5px;">%</span>
<span class="a t" style="top:63.49px;font-size:13px;line-height:15.60px;color:#807c80;font-weight:bold;left:441px;">,</span>
<span class="a t" style="top:68.11px;font-size:5.5px;line-height:6.60px;color:#a8a4a8;left:461.5px;">.0</span>
<span class="a t" style="top:73.61px;font-size:5.5px;line-height:6.60px;color:#a8a4a8;left:458px;">.00</span>
<span class="a t" style="top:68.11px;font-size:5.5px;line-height:6.60px;color:#a8a4a8;left:472.5px;">.00</span>
<span class="a t" style="top:73.61px;font-size:5.5px;line-height:6.60px;color:#a8a4a8;left:477px;">.0</span>
<span class="a t" style="top:66.55px;font-size:9px;line-height:10.80px;color:#a29ea2;left:489px;">Conditional</span>
<span class="a t" style="top:77.75px;font-size:9px;line-height:10.80px;color:#a29ea2;transform:scaleX(0.988);transform-origin:0 50%;left:488px;">Formatting</span>
<span class="a t" style="top:66.55px;font-size:9px;line-height:10.80px;color:#a29ea2;transform:scaleX(0.901);transform-origin:0 50%;left:538px;">Format as</span>
<span class="a t" style="top:77.75px;font-size:9px;line-height:10.80px;color:#a29ea2;transform:scaleX(0.930);transform-origin:0 50%;left:545px;">Table</span>
<span class="a t" style="top:47.64px;font-size:9.5px;line-height:11.40px;color:#555;transform:scaleX(1.045);transform-origin:0 50%;left:583px;">Normal</span>
<span class="a t" style="top:47.64px;font-size:9.5px;line-height:11.40px;color:#8a868a;transform:scaleX(0.976);transform-origin:0 50%;left:658px;">Bad</span>
<span class="a t" style="top:67.14px;font-size:9.5px;line-height:11.40px;color:#7a767a;transform:scaleX(1.011);transform-origin:0 50%;left:583px;">Good</span>
<span class="a t" style="top:67.14px;font-size:9.5px;line-height:11.40px;color:#b3afb3;transform:scaleX(1.045);transform-origin:0 50%;left:658px;">Neutral</span>
<span class="a t" style="top:66.55px;font-size:9px;line-height:10.80px;color:#444;transform:scaleX(0.933);transform-origin:0 50%;left:747.5px;">Insert</span>
<span class="a t" style="top:66.55px;font-size:9px;line-height:10.80px;color:#444;transform:scaleX(0.923);transform-origin:0 50%;left:773.5px;">Delete</span>
<span class="a t" style="top:66.55px;font-size:9px;line-height:10.80px;color:#444;transform:scaleX(0.929);transform-origin:0 50%;left:800.5px;">Format</span>
<span class="a t" style="top:40.79px;font-size:12.5px;line-height:15.00px;color:#7d797d;transform:scaleX(1.034);transform-origin:0 50%;left:835.5px;">Σ</span>
<span class="a t" style="top:41.64px;font-size:9.5px;line-height:11.40px;color:#aaa6aa;transform:scaleX(0.883);transform-origin:0 50%;left:847.5px;">AutoSum</span>
<span class="a t" style="top:56.14px;font-size:9.5px;line-height:11.40px;color:#aaa6aa;transform:scaleX(0.782);transform-origin:0 50%;left:847.5px;">Fill</span>
<span class="a t" style="top:71.14px;font-size:9.5px;line-height:11.40px;color:#444;transform:scaleX(0.771);transform-origin:0 50%;left:847.5px;">Clear</span>
<span class="a t" style="top:40.53px;font-size:10.5px;line-height:12.60px;color:#a29ea2;transform:scaleX(1.026);transform-origin:0 50%;left:897.3px;">A</span>
<span class="a t" style="top:50.53px;font-size:10.5px;line-height:12.60px;color:#a29ea2;transform:scaleX(0.965);transform-origin:0 50%;left:897.8px;">Z</span>
<span class="a t" style="top:66.55px;font-size:9px;line-height:10.80px;color:#a29ea2;transform:scaleX(0.939);transform-origin:0 50%;left:895px;">Sort &amp;</span>
<span class="a t" style="top:77.75px;font-size:9px;line-height:10.80px;color:#a29ea2;transform:scaleX(0.950);transform-origin:0 50%;left:895.5px;">Filter</span>
<span class="a t" style="top:66.55px;font-size:9px;line-height:10.80px;color:#444;transform:scaleX(0.942);transform-origin:0 50%;left:923.5px;">Find &amp;</span>
<span class="a t" style="top:77.75px;font-size:9px;line-height:10.80px;color:#444;transform:scaleX(0.879);transform-origin:0 50%;left:922px;">Select</span>
<span class="a t" style="top:134.00px;font-size:9.4px;line-height:11.28px;color:#555;left:-74.5px;width:300px;text-align:center;transform:scaleX(0.92);">A</span>
<span class="a t" style="top:134.00px;font-size:9.4px;line-height:11.28px;color:#555;left:3.75px;width:300px;text-align:center;transform:scaleX(0.92);">B</span>
<span class="a t" style="top:134.00px;font-size:9.4px;line-height:11.28px;color:#555;left:49.25px;width:300px;text-align:center;transform:scaleX(0.92);">C</span>
<span class="a t" style="top:134.00px;font-size:9.4px;line-height:11.28px;color:#555;left:94.75px;width:300px;text-align:center;transform:scaleX(0.92);">D</span>
<span class="a t" style="top:134.00px;font-size:9.4px;line-height:11.28px;color:#555;left:140.25px;width:300px;text-align:center;transform:scaleX(0.92);">E</span>
<span class="a t" style="top:134.00px;font-size:9.4px;line-height:11.28px;color:#555;left:185.75px;width:300px;text-align:center;transform:scaleX(0.92);">F</span>
<span class="a t" style="top:134.00px;font-size:9.4px;line-height:11.28px;color:#555;left:231.25px;width:300px;text-align:center;transform:scaleX(0.92);">G</span>
<span class="a t" style="top:134.00px;font-size:9.4px;line-height:11.28px;color:#555;left:276.75px;width:300px;text-align:center;transform:scaleX(0.92);">H</span>
<span class="a t" style="top:134.00px;font-size:9.4px;line-height:11.28px;color:#555;left:322.25px;width:300px;text-align:center;transform:scaleX(0.92);">I</span>
<span class="a t" style="top:134.00px;font-size:9.4px;line-height:11.28px;color:#555;left:367.75px;width:300px;text-align:center;transform:scaleX(0.92);">J</span>
<span class="a t" style="top:134.00px;font-size:9.4px;line-height:11.28px;color:#555;left:413.25px;width:300px;text-align:center;transform:scaleX(0.92);">K</span>
<span class="a t" style="top:134.00px;font-size:9.4px;line-height:11.28px;color:#555;left:458.75px;width:300px;text-align:center;transform:scaleX(0.92);">L</span>
<span class="a t" style="top:134.00px;font-size:9.4px;line-height:11.28px;color:#555;left:504.25px;width:300px;text-align:center;transform:scaleX(0.92);">M</span>
<span class="a t" style="top:134.00px;font-size:9.4px;line-height:11.28px;color:#555;left:549.75px;width:300px;text-align:center;transform:scaleX(0.92);">N</span>
<span class="a t" style="top:134.00px;font-size:9.4px;line-height:11.28px;color:#555;left:595.25px;width:300px;text-align:center;transform:scaleX(0.92);">O</span>
<span class="a t" style="top:160.07px;font-size:8.8px;line-height:10.56px;color:#505050;left:-140.2px;width:300px;text-align:center;">1</span>
<span class="a t" style="top:178.57px;font-size:8.8px;line-height:10.56px;color:#505050;left:-140.2px;width:300px;text-align:center;">2</span>
<span class="a t" style="top:201.07px;font-size:8.8px;line-height:10.56px;color:#505050;left:-140.2px;width:300px;text-align:center;">3</span>
<span class="a t" style="top:219.07px;font-size:8.8px;line-height:10.56px;color:#505050;left:-140.2px;width:300px;text-align:center;">4</span>
<span class="a t" style="top:241.07px;font-size:8.8px;line-height:10.56px;color:#505050;left:-140.2px;width:300px;text-align:center;">5</span>
<span class="a t" style="top:259.07px;font-size:8.8px;line-height:10.56px;color:#505050;left:-140.2px;width:300px;text-align:center;">6</span>
<span class="a t" style="top:281.07px;font-size:8.8px;line-height:10.56px;color:#505050;left:-140.2px;width:300px;text-align:center;">7</span>
<span class="a t" style="top:299.57px;font-size:8.8px;line-height:10.56px;color:#505050;left:-140.2px;width:300px;text-align:center;">8</span>
<span class="a t" style="top:321.07px;font-size:8.8px;line-height:10.56px;color:#505050;left:-140.2px;width:300px;text-align:center;">9</span>
<span class="a t" style="top:339.57px;font-size:8.8px;line-height:10.56px;color:#505050;left:-140.2px;width:300px;text-align:center;">10</span>
<span class="a t" style="top:361.57px;font-size:8.8px;line-height:10.56px;color:#505050;left:-140.2px;width:300px;text-align:center;">11</span>
<span class="a t" style="top:379.57px;font-size:8.8px;line-height:10.56px;color:#505050;left:-140.2px;width:300px;text-align:center;">12</span>
<span class="a t" style="top:401.57px;font-size:8.8px;line-height:10.56px;color:#505050;left:-140.2px;width:300px;text-align:center;">13</span>
<span class="a t" style="top:419.57px;font-size:8.8px;line-height:10.56px;color:#505050;left:-140.2px;width:300px;text-align:center;">14</span>
<span class="a t" style="top:434.00px;font-size:8.8px;line-height:10.56px;color:#505050;left:-140.2px;width:300px;text-align:center;">15</span>
<span class="a t" style="top:447.80px;font-size:8.8px;line-height:10.56px;color:#505050;left:-140.2px;width:300px;text-align:center;">16</span>
<span class="a t" style="top:461.55px;font-size:8.8px;line-height:10.56px;color:#505050;left:-140.2px;width:300px;text-align:center;">17</span>
<span class="a t" style="top:475.30px;font-size:8.8px;line-height:10.56px;color:#505050;left:-140.2px;width:300px;text-align:center;">18</span>
<span class="a t" style="top:489.05px;font-size:8.8px;line-height:10.56px;color:#505050;left:-140.2px;width:300px;text-align:center;">19</span>
<span class="a t" style="top:502.80px;font-size:8.8px;line-height:10.56px;color:#505050;left:-140.2px;width:300px;text-align:center;">20</span>
<span class="a t" style="top:516.55px;font-size:8.8px;line-height:10.56px;color:#505050;left:-140.2px;width:300px;text-align:center;">21</span>
<span class="a t" style="top:530.30px;font-size:8.8px;line-height:10.56px;color:#505050;left:-140.2px;width:300px;text-align:center;">22</span>
<span class="a t" style="top:544.05px;font-size:8.8px;line-height:10.56px;color:#505050;left:-140.2px;width:300px;text-align:center;">23</span>
<span class="a t" style="top:557.80px;font-size:8.8px;line-height:10.56px;color:#505050;left:-140.2px;width:300px;text-align:center;">24</span>
<span class="a t" style="top:571.55px;font-size:8.8px;line-height:10.56px;color:#505050;left:-140.2px;width:300px;text-align:center;">25</span>
<span class="a t" style="top:585.30px;font-size:8.8px;line-height:10.56px;color:#505050;left:-140.2px;width:300px;text-align:center;">26</span>
<span class="a t" style="top:599.05px;font-size:8.8px;line-height:10.56px;color:#505050;left:-140.2px;width:300px;text-align:center;">27</span>
<span class="a t" style="top:612.80px;font-size:8.8px;line-height:10.56px;color:#505050;left:-140.2px;width:300px;text-align:center;clip-path:inset(0 0 4.4px 0);">28</span>
<span class="a t" style="top:153.14px;font-size:16px;line-height:19.20px;color:#fff;font-weight:bold;transform:scaleX(1.228);transform-origin:0 50%;left:51px;-webkit-text-stroke:0.45px #fff;">7/4/2015</span>
<span class="a t" style="top:194.64px;font-size:16px;line-height:19.20px;color:#fff;font-weight:bold;transform:scaleX(1.229);transform-origin:0 50%;left:40px;-webkit-text-stroke:0.45px #fff;">12/4/2015</span>
<span class="a t" style="top:236.14px;font-size:16px;line-height:19.20px;color:#fff;font-weight:bold;transform:scaleX(1.255);transform-origin:0 50%;left:94px;-webkit-text-stroke:0.45px #fff;">200</span>
<span class="a t" style="top:275.74px;font-size:16px;line-height:19.20px;color:#fff;font-weight:bold;transform:scaleX(1.255);transform-origin:0 50%;left:94px;-webkit-text-stroke:0.45px #fff;">150</span>
<span class="a t" style="top:315.74px;font-size:16px;line-height:19.20px;color:#fff;font-weight:bold;transform:scaleX(1.264);transform-origin:0 50%;left:105px;-webkit-text-stroke:0.45px #fff;">50</span>
<span class="a t" style="top:355.74px;font-size:16px;line-height:19.20px;color:#fff;font-weight:bold;transform:scaleX(1.255);transform-origin:0 50%;left:94px;-webkit-text-stroke:0.45px #fff;">153</span>
<span class="a t" style="top:396.24px;font-size:16px;line-height:19.20px;color:#fff;font-weight:bold;transform:scaleX(1.303);transform-origin:0 50%;left:98.5px;-webkit-text-stroke:0.45px #fff;">0.3</span>
<span class="a t" style="top:178.53px;font-size:10px;line-height:12.00px;color:#f2fff2;transform:scaleX(1.022);transform-origin:0 50%;left:21.5px;">Start Date</span>
<span class="a t" style="top:218.84px;font-size:10px;line-height:12.00px;color:#f2fff2;transform:scaleX(1.007);transform-origin:0 50%;left:21.5px;">End Date</span>
<span class="a t" style="top:259.53px;font-size:10px;line-height:12.00px;color:#f2fff2;transform:scaleX(1.039);transform-origin:0 50%;left:21.5px;">Start Weight</span>
<span class="a t" style="top:299.73px;font-size:10px;line-height:12.00px;color:#f2fff2;transform:scaleX(1.029);transform-origin:0 50%;left:21.5px;">End Weight</span>
<span class="a t" style="top:340.03px;font-size:10px;line-height:12.00px;color:#f2fff2;transform:scaleX(1.028);transform-origin:0 50%;left:21.5px;">Goal Loss</span>
<span class="a t" style="top:380.63px;font-size:10px;line-height:12.00px;color:#f2fff2;transform:scaleX(1.045);transform-origin:0 50%;left:21.5px;">Days to Go</span>
<span class="a t" style="top:420.63px;font-size:10px;line-height:12.00px;color:#f2fff2;transform:scaleX(1.033);transform-origin:0 50%;left:21.5px;">Loss Per Day</span>
<span class="a t" style="top:146.83px;font-size:22.5px;line-height:27.00px;color:#111;transform:scaleX(0.977);transform-origin:0 50%;left:135.3px;">Goals</span>
<span class="a t" style="top:177.53px;font-size:10.5px;line-height:12.60px;color:#222;transform:scaleX(1.063);transform-origin:0 50%;left:133.5px;">DIET &amp; EXERCISE JOURNAL</span>
<span class="a t" style="top:238.23px;font-size:12.6px;line-height:15.12px;color:#fff;font-weight:bold;transform:scaleX(1.216);transform-origin:0 50%;left:134px;-webkit-text-stroke:0.5px #fff;">DIETARY ANALYSIS</span>
<span class="a t" style="top:280.88px;font-size:7.5px;line-height:9.00px;color:#666;right:836px;">100%</span>
<span class="a t" style="top:323.98px;font-size:7.5px;line-height:9.00px;color:#666;right:836px;">75%</span>
<span class="a t" style="top:366.98px;font-size:7.5px;line-height:9.00px;color:#666;right:836px;">50%</span>
<span class="a t" style="top:410.08px;font-size:7.5px;line-height:9.00px;color:#666;right:836px;">25%</span>
<span class="a t" style="top:453.08px;font-size:7.5px;line-height:9.00px;color:#666;right:836px;">0%</span>
<span class="a t" style="top:463.87px;font-size:8px;line-height:9.60px;color:#595959;left:77.1px;width:300px;text-align:center;transform:scaleX(0.97);">March 1, 2013</span>
<span class="a t" style="top:463.87px;font-size:8px;line-height:9.60px;color:#595959;left:139.5px;width:300px;text-align:center;transform:scaleX(0.97);">March 2, 2013</span>
<span class="a t" style="top:463.87px;font-size:8px;line-height:9.60px;color:#595959;left:201.8px;width:300px;text-align:center;transform:scaleX(0.97);">March 3, 2013</span>
<span class="a t" style="top:463.87px;font-size:8px;line-height:9.60px;color:#595959;left:264.0px;width:300px;text-align:center;transform:scaleX(0.97);">March 4, 2013</span>
<span class="a t" style="top:348.88px;font-size:7.5px;line-height:9.00px;color:#595959;transform:scaleX(0.939);transform-origin:0 50%;left:466.5px;">FAT</span>
<span class="a t" style="top:364.88px;font-size:7.5px;line-height:9.00px;color:#595959;transform:scaleX(0.851);transform-origin:0 50%;left:466.5px;">FIBER</span>
<span class="a t" style="top:380.88px;font-size:7.5px;line-height:9.00px;color:#595959;transform:scaleX(0.871);transform-origin:0 50%;left:466.5px;">SUGARS</span>
<span class="a t" style="top:396.88px;font-size:7.5px;line-height:9.00px;color:#595959;transform:scaleX(0.863);transform-origin:0 50%;left:466.5px;">CARBS</span>
<span class="a t" style="top:620.96px;font-size:9.8px;line-height:11.76px;color:#555;transform:scaleX(0.946);transform-origin:0 50%;left:62.5px;">Diet</span>
<span class="a t" style="top:620.96px;font-size:9.8px;line-height:11.76px;color:#217346;font-weight:bold;transform:scaleX(0.918);transform-origin:0 50%;left:91.5px;">Goals</span>
<span class="a t" style="top:639.68px;font-size:8.3px;line-height:9.96px;color:#fff;transform:scaleX(0.834);transform-origin:0 50%;left:3px;">Ready</span>
<span class="a t" style="top:638.57px;font-size:8px;line-height:9.60px;color:#fff;transform:scaleX(0.928);transform-origin:0 50%;left:1001px;">100%</span>
<span class="a t" style="top:137.94px;font-size:15.5px;line-height:18.60px;color:#3f8f63;transform:scaleX(0.932);transform-origin:0 50%;left:783.5px;">DietTrackerComplete</span>
<span class="a t" style="top:178.64px;font-size:16px;line-height:19.20px;color:#fff;transform:scaleX(0.979);transform-origin:0 50%;left:794.5px;">Welcome</span>
<span class="a t" style="top:220.63px;font-size:9.2px;line-height:11.04px;color:#606060;transform:scaleX(0.939);transform-origin:0 50%;left:809px;">Use formatting capabilites to layout and</span>
<span class="a t" style="top:232.13px;font-size:9.2px;line-height:11.04px;color:#606060;transform:scaleX(0.963);transform-origin:0 50%;left:809px;">format the data</span>
<span class="a t" style="top:274.12px;font-size:11px;line-height:13.20px;color:#262626;font-weight:bold;transform:scaleX(0.893);transform-origin:0 50%;left:809px;">3. Highlight</span>
<span class="a t" style="top:289.13px;font-size:9.2px;line-height:11.04px;color:#606060;transform:scaleX(0.957);transform-origin:0 50%;left:809px;">Identify and highlight the row with most</span>
<span class="a t" style="top:300.63px;font-size:9.2px;line-height:11.04px;color:#606060;transform:scaleX(0.916);transform-origin:0 50%;left:809px;">calories</span>
<span class="a t" style="top:342.32px;font-size:11px;line-height:13.20px;color:#262626;font-weight:bold;transform:scaleX(0.849);transform-origin:0 50%;left:809px;">4. Create Goals Sheet</span>
<span class="a t" style="top:357.33px;font-size:9.2px;line-height:11.04px;color:#606060;transform:scaleX(0.904);transform-origin:0 50%;left:809px;">Create a new worksheet to use as a</span>
<span class="a t" style="top:368.83px;font-size:9.2px;line-height:11.04px;color:#606060;transform:scaleX(0.938);transform-origin:0 50%;left:809px;">dashboard for diet goals</span>
<span class="a t" style="top:410.32px;font-size:11px;line-height:13.20px;color:#262626;font-weight:bold;transform:scaleX(0.883);transform-origin:0 50%;left:809px;">5. Generate Template</span>
<span class="a t" style="top:425.33px;font-size:9.2px;line-height:11.04px;color:#606060;transform:scaleX(0.925);transform-origin:0 50%;left:809px;">Create a template to capture goals using</span>
<span class="a t" style="top:436.83px;font-size:9.2px;line-height:11.04px;color:#606060;transform:scaleX(0.941);transform-origin:0 50%;left:809px;">formatting capabilities and absolute</span>
<span class="a t" style="top:448.33px;font-size:9.2px;line-height:11.04px;color:#606060;transform:scaleX(0.979);transform-origin:0 50%;left:809px;">positioning</span>
<span class="a t" style="top:490.32px;font-size:11px;line-height:13.20px;color:#262626;font-weight:bold;transform:scaleX(0.851);transform-origin:0 50%;left:809px;">6. Insert Goals</span>
<span class="a t" style="top:505.33px;font-size:9.2px;line-height:11.04px;color:#606060;transform:scaleX(0.933);transform-origin:0 50%;left:809px;">Import goals from external data source and</span>
<span class="a t" style="top:516.83px;font-size:9.2px;line-height:11.04px;color:#606060;transform:scaleX(0.948);transform-origin:0 50%;left:809px;">write the data according to the template</span>
<span class="a t" style="top:558.32px;font-size:11px;line-height:13.20px;color:#262626;font-weight:bold;transform:scaleX(0.856);transform-origin:0 50%;left:809px;">7. Create Chart</span>
<span class="a t" style="top:573.33px;font-size:9.2px;line-height:11.04px;color:#484848;transform:scaleX(0.906);transform-origin:0 50%;left:809px;">Create a chart to analyze goals vs. calorie</span>
<span class="a t" style="top:584.83px;font-size:9.2px;line-height:11.04px;color:#484848;transform:scaleX(0.950);transform-origin:0 50%;left:809px;">consumption</span>
</div></body></html>
